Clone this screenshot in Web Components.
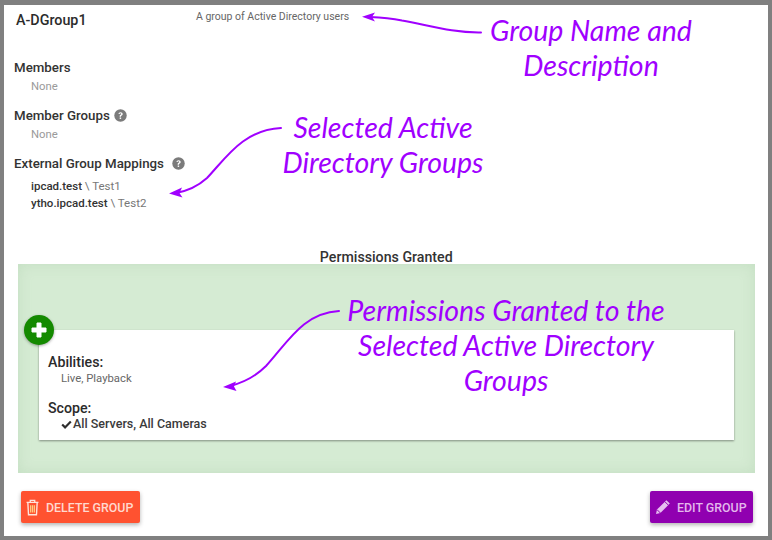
<!DOCTYPE html>
<html>
<head>
<meta charset="utf-8">
<style>
    html, body { margin: 0; padding: 0; background: #808080; }
</style>
</head>
<body>
<group-page>
    <group-header slot="header" name="A-DGroup1" description="A group of Active Directory users"></group-header>
    <info-section title="Members" class="plain"><muted-line>None</muted-line></info-section>
    <info-section title="Member Groups" help><muted-line>None</muted-line></info-section>
    <info-section title="External Group Mappings" help wide>
        <mapping-line domain="ipcad.test" group="Test1"></mapping-line>
        <mapping-line domain="ytho.ipcad.test" group="Test2"></mapping-line>
    </info-section>
    <permissions-panel title="Permissions Granted">
        <ability-card abilities="Live, Playback" scope="All Servers, All Cameras"></ability-card>
    </permissions-panel>
    <div slot="actions" style="display:contents">
        <action-button kind="delete">DELETE GROUP</action-button>
        <action-button kind="edit">EDIT GROUP</action-button>
    </div>
    <callout-layer slot="overlay"></callout-layer>
</group-page>

<script>
const HELP_ICON = `<svg viewBox="0 0 24 24" width="13" height="13"><circle cx="12" cy="12" r="11.5" fill="#7b7b7b"/><path d="M8.3 9.4c.2-2.3 1.8-3.6 3.9-3.6 2.2 0 3.8 1.3 3.8 3.2 0 1.5-.8 2.2-1.9 3-.8.6-1.2 1-1.2 1.9v.4h-2.5v-.7c0-1.4.6-2.1 1.6-2.8.9-.6 1.4-1 1.4-1.7 0-.8-.7-1.3-1.5-1.3-.9 0-1.5.6-1.6 1.6z" fill="#fff"/><rect x="10.5" y="15.7" width="2.7" height="2.6" fill="#fff"/></svg>`;

class GroupPage extends HTMLElement {
    constructor() {
        super();
        this.attachShadow({ mode: "open" });
        this.shadowRoot.innerHTML = `
            <style>
                :host {
                    display: block;
                    position: relative;
                    box-sizing: border-box;
                    width: 772px;
                    height: 540px;
                    padding: 5px 4px 4px 4px;
                    background: #808080;
                    font-family: Roboto, "Liberation Sans", sans-serif;
                    overflow: hidden;
                }
                .sheet {
                    display: flex;
                    flex-direction: column;
                    height: 531px;
                    background: #fff;
                }
                .sections {
                    display: flex;
                    flex-direction: column;
                    padding: 0 10px;
                }
                .actions {
                    display: flex;
                    justify-content: space-between;
                    padding: 18px 15px 0 17px;
                }
            </style>
            <div class="sheet">
                <slot name="header"></slot>
                <div class="sections"><slot></slot></div>
                <div class="actions"><slot name="actions"></slot></div>
            </div>
            <slot name="overlay"></slot>
        `;
    }
}

class GroupHeader extends HTMLElement {
    constructor() {
        super();
        this.attachShadow({ mode: "open" });
        this.shadowRoot.innerHTML = `
            <style>
                :host {
                    display: flex;
                    align-items: flex-start;
                    height: 54px;
                    padding-left: 12px;
                }
                .name {
                    width: 180px;
                    margin-top: 7px;
                    font-size: 14.3px;
                    line-height: 16px;
                    font-weight: 500;
                    color: #2b2b2b;
                }
                .description {
                    margin-top: 5.500px;
                    font-size: 10.5px;
                    line-height: 12px;
                    color: #666;
                }
            </style>
            <div class="name">${this.getAttribute("name")}</div>
            <div class="description">${this.getAttribute("description")}</div>
        `;
    }
}

class InfoSection extends HTMLElement {
    constructor() {
        super();
        this.attachShadow({ mode: "open" });
        const help = this.hasAttribute("help") ? `<span class="help">${HELP_ICON}</span>` : "";
        this.shadowRoot.innerHTML = `
            <style>
                :host {
                    display: block;
                    margin-bottom: 13px;
                }
                :host([wide]) .help { margin-left: 8px; }
                :host([wide]) .body { padding-top: 7px; }
                .title {
                    display: flex;
                    align-items: center;
                    height: 16px;
                    font-size: 13.3px;
                    font-weight: 500;
                    color: #333;
                }
                .help {
                    display: flex;
                    margin-left: 4px;
                }
                .body {
                    padding: 4px 0 0 17px;
                }
            </style>
            <div class="title">${this.getAttribute("title")}${help}</div>
            <div class="body"><slot></slot></div>
        `;
    }
}

class MutedLine extends HTMLElement {
    constructor() {
        super();
        this.attachShadow({ mode: "open" });
        this.shadowRoot.innerHTML = `
            <style>
                :host {
                    display: block;
                    font-size: 11.3px;
                    line-height: 15px;
                    color: #9a9a9a;
                }
            </style>
            <slot></slot>
        `;
    }
}

class MappingLine extends HTMLElement {
    constructor() {
        super();
        this.attachShadow({ mode: "open" });
        this.shadowRoot.innerHTML = `
            <style>
                :host {
                    display: block;
                    font-size: 11.5px;
                    line-height: 17px;
                    color: #777;
                }
                b { font-weight: 500; color: #333; }
            </style>
            <b>${this.getAttribute("domain")}</b> \\ ${this.getAttribute("group")}
        `;
    }
}

class PermissionsPanel extends HTMLElement {
    constructor() {
        super();
        this.attachShadow({ mode: "open" });
        this.shadowRoot.innerHTML = `
            <style>
                :host {
                    display: block;
                    margin: 25px 3px 0 3.5px;
                }
                .title {
                    height: 14px;
                    line-height: 14px;
                    text-align: center;
                    font-size: 14.2px;
                    font-weight: 500;
                    color: #333;
                }
                .panel {
                    box-sizing: border-box;
                    height: 209px;
                    padding: 66px 21px 0 21.5px;
                    background: #d5ebd3;
                    box-shadow: inset 0 0 14px rgba(150, 190, 150, .28);
                }
            </style>
            <div class="title">${this.getAttribute("title")}</div>
            <div class="panel"><slot></slot></div>
        `;
    }
}

class AbilityCard extends HTMLElement {
    constructor() {
        super();
        this.attachShadow({ mode: "open" });
        this.shadowRoot.innerHTML = `
            <style>
                :host {
                    display: block;
                    position: relative;
                    box-sizing: border-box;
                    height: 110px;
                    padding: 24px 9px 0 9px;
                    background: #fff;
                    box-shadow: 0 1px 2px rgba(0, 0, 0, .4);
                }
                .badge {
                    position: absolute;
                    left: -15px;
                    top: -15px;
                    width: 30px;
                    height: 30px;
                    border-radius: 50%;
                    background: #148a00;
                    box-shadow: 0 1px 3px rgba(0, 0, 0, .35);
                    display: flex;
                    align-items: center;
                    justify-content: center;
                }
                .label {
                    font-size: 14.2px;
                    line-height: 16px;
                    font-weight: 500;
                    color: #2b2b2b;
                }
                .value {
                    padding-left: 13px;
                    margin-top: 1px;
                    font-size: 11.3px;
                    line-height: 16px;
                    color: #666;
                }
                .scope {
                    display: flex;
                    align-items: center;
                    gap: 1px;
                    padding-left: 13px;
                    font-size: 12.5px;
                    line-height: 16px;
                    font-weight: 500;
                    color: #3a3a3a;
                }
                .second { margin-top: 13px; }
            </style>
            <div class="badge">
                <svg viewBox="0 0 16 16" width="16" height="16"><path d="M6 1h4v5h5v4h-5v5H6v-5H1V6h5z" fill="#fff" stroke="#fff" stroke-linejoin="round"/></svg>
            </div>
            <div class="label">Abilities:</div>
            <div class="value">${this.getAttribute("abilities")}</div>
            <div class="label second">Scope:</div>
            <div class="scope">
                <svg viewBox="0 0 12 10" width="11" height="9"><path d="M1.2 5l3.2 3.2L10.8 1.6" fill="none" stroke="#2f2f2f" stroke-width="2.4"/></svg>
                <span>${this.getAttribute("scope")}</span>
            </div>
        `;
    }
}

class ActionButton extends HTMLElement {
    constructor() {
        super();
        this.attachShadow({ mode: "open" });
        const icons = {
            delete: `<svg viewBox="0 0 14 18" width="13" height="17"><path d="M.6 3.500h12.800M4.600 3.500V1.400h4.800v2.100" fill="none" stroke="#ffe3da" stroke-width="1.4"/><path d="M2 4l.7 12.800h8.600L12 4" fill="none" stroke="#ffe3da" stroke-width="1.500"/><path d="M5 6.500v8M7 6.500v8M9 6.500v8" stroke="#ffcf80" stroke-width="1.300"/></svg>`,
            edit: `<svg viewBox="0 0 16 16" width="16" height="16"><path d="M1 15l1-4.400L11.400 1.200l3.400 3.400L5.400 14z" fill="#e6bff0"/><path d="M9.900 2.700l3.400 3.400" stroke="#9000b0" stroke-width="1"/><path d="M2 10.600L5.400 14" stroke="#9000b0" stroke-width="1"/></svg>`
        };
        const kind = this.getAttribute("kind");
        this.shadowRoot.innerHTML = `
            <style>
                :host {
                    display: flex;
                    align-items: center;
                    box-sizing: border-box;
                    height: 32px;
                    padding: 0 0 0 5px;
                    gap: 7px;
                    border-radius: 2px;
                    font-size: 12.4px;
                    font-weight: 500;
                    white-space: nowrap;
                    box-shadow: 0 2px 4px rgba(0, 0, 0, .3);
                }
                :host([kind="delete"]) {
                    width: 119px;
                    background: #ff5230;
                    color: #ffd9cf;
                }
                :host([kind="edit"]) {
                    width: 103px;
                    gap: 6px;
                    background: #9000b0;
                    color: #e3b8ec;
                }
            </style>
            ${icons[kind]}
            <slot></slot>
        `;
    }
}

class CalloutLayer extends HTMLElement {
    constructor() {
        super();
        this.attachShadow({ mode: "open" });
        const notes = [
            { center: 591, top: 13, lines: ["Group Name and", "Description"] },
            { center: 383, top: 110, lines: ["Selected Active", "Directory Groups"] },
            { center: 506, top: 293, lines: ["Permissions Granted to the", "Selected Active Directory", "Groups"] }
        ];
        this.shadowRoot.innerHTML = `
            <style>
                :host {
                    position: absolute;
                    inset: 0;
                    display: block;
                    pointer-events: none;
                }
                svg { position: absolute; left: 0; top: 0; }
                .note {
                    position: absolute;
                    width: 360px;
                    margin-left: -180px;
                    text-align: center;
                    font-family: Lato, "Open Sans", sans-serif;
                    font-style: italic;
                    font-size: 28.5px;
                    line-height: 35px;
                    color: #a000ff;
                }
            </style>
            <svg width="772" height="540" viewBox="0 0 772 540">
                <g fill="none" stroke="#a000ff" stroke-width="2" stroke-linecap="round">
                    <path d="M481 32.500C452 33 428 25 402 20.500C392 18.500 382 17.500 370 17"/>
                    <path d="M281 128C243 130 226 158 207 178C197 187 187 191 176 193"/>
                    <path d="M339 311C303 313 288 342 266 366C256 376 246 382 230 386"/>
                </g>
                <g fill="#a000ff">
                    <path d="M362 16.800L375 12.500L372 17L375 21.500z"/>
                    <path d="M169 193.500L182 187.500L179.500 193L182.500 197.500z"/>
                    <path d="M223 387L236 381.500L234 386.500L236.500 391z"/>
                </g>
            </svg>
            ${notes.map(note => `<div class="note" style="left:${note.center}px;top:${note.top}px">${note.lines.map(line => `<div>${line}</div>`).join("")}</div>`).join("")}
        `;
    }
}

customElements.define("group-page", GroupPage);
customElements.define("group-header", GroupHeader);
customElements.define("info-section", InfoSection);
customElements.define("muted-line", MutedLine);
customElements.define("mapping-line", MappingLine);
customElements.define("permissions-panel", PermissionsPanel);
customElements.define("ability-card", AbilityCard);
customElements.define("action-button", ActionButton);
customElements.define("callout-layer", CalloutLayer);
</script>
</body>
</html>
